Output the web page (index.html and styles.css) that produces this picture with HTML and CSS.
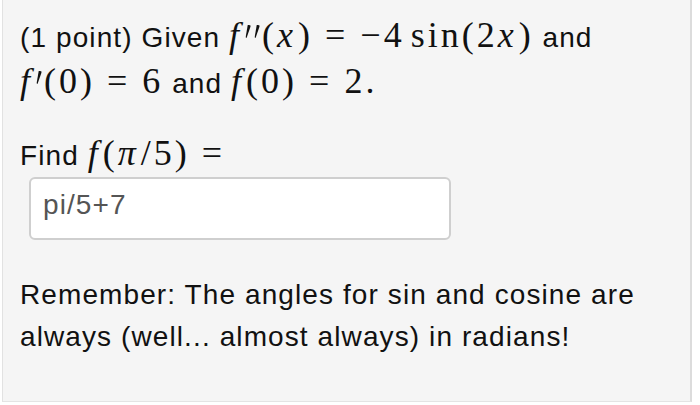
FILE: index.html
```html
<!DOCTYPE html>
<html>
<head>
<meta charset="utf-8">
<link rel="stylesheet" href="styles.css">
</head>
<body>
<div class="panel">
  <p class="intro">(1 point) Given <span class="m"><i>f</i><span class="pr"></span><span class="pr"></span>(<i>x</i>)<span class="rel">=</span>−4<span class="thin"></span>sin(2<i>x</i>)</span> and<br><span class="m"><i>f</i><span class="pr"></span>(0)<span class="rel">=</span>6</span> and <span class="m"><i>f</i>(0)<span class="rel">=</span>2.</span></p>
  <p class="find">Find <span class="m"><i>f</i>(<i>π</i>/5)<span class="rel">=</span></span></p>
  <div class="answer">pi/5+7</div>
  <p class="note">Remember: The angles for sin and cosine are always (well... almost always) in radians!</p>
</div>
</body>
</html>
```

FILE: styles.css
```css
html, body {
  margin: 0;
  padding: 0;
  background: #ffffff;
}
body {
  width: 700px;
  height: 405px;
  overflow: hidden;
}
.panel {
  box-sizing: border-box;
  margin-left: 2px;
  width: 690px;
  height: 402px;
  background: #f5f5f5;
  border-left: 1px solid #e2e2e2;
  border-right: 2px solid #dcdcdc;
  border-bottom: 1px solid #e4e4e4;
  padding: 1px 20px 0 17px;
  font-family: "Liberation Sans", Arial, sans-serif;
  font-size: 28px;
  letter-spacing: 1.1px;
  color: #111;
}
p {
  margin: 0;
}
.intro {
  line-height: 46px;
  margin-top: 14px;
}
.m {
  font-family: "Liberation Serif", "Times New Roman", serif;
  font-size: 36px;
  letter-spacing: 3px;
  line-height: 0;
  white-space: nowrap;
}
.m i {
  font-style: italic;
  padding-right: 2px;
}
.pr {
  display: inline-block;
  width: 6px;
  height: 13px;
  margin: 0 2px 0 1px;
  vertical-align: 9px;
  background: #111;
  clip-path: polygon(45% 0, 100% 0, 25% 100%, 8% 100%);
  border-radius: 2px;
}
.rel {
  margin: 0 12px;
}
.thin {
  display: inline-block;
  width: 6px;
}
.find {
  margin-top: 26px;
  line-height: 46px;
}
.answer {
  box-sizing: border-box;
  margin: -2px 0 0 9px;
  width: 422px;
  height: 63px;
  background: #fff;
  border: 2px solid #cfcfcf;
  border-radius: 6px;
  padding: 0 0 0 12px;
  line-height: 52px;
  font-size: 28px;
  letter-spacing: 1.1px;
  color: #555;
}
.note {
  margin-top: 34px;
  line-height: 42px;
}
```
